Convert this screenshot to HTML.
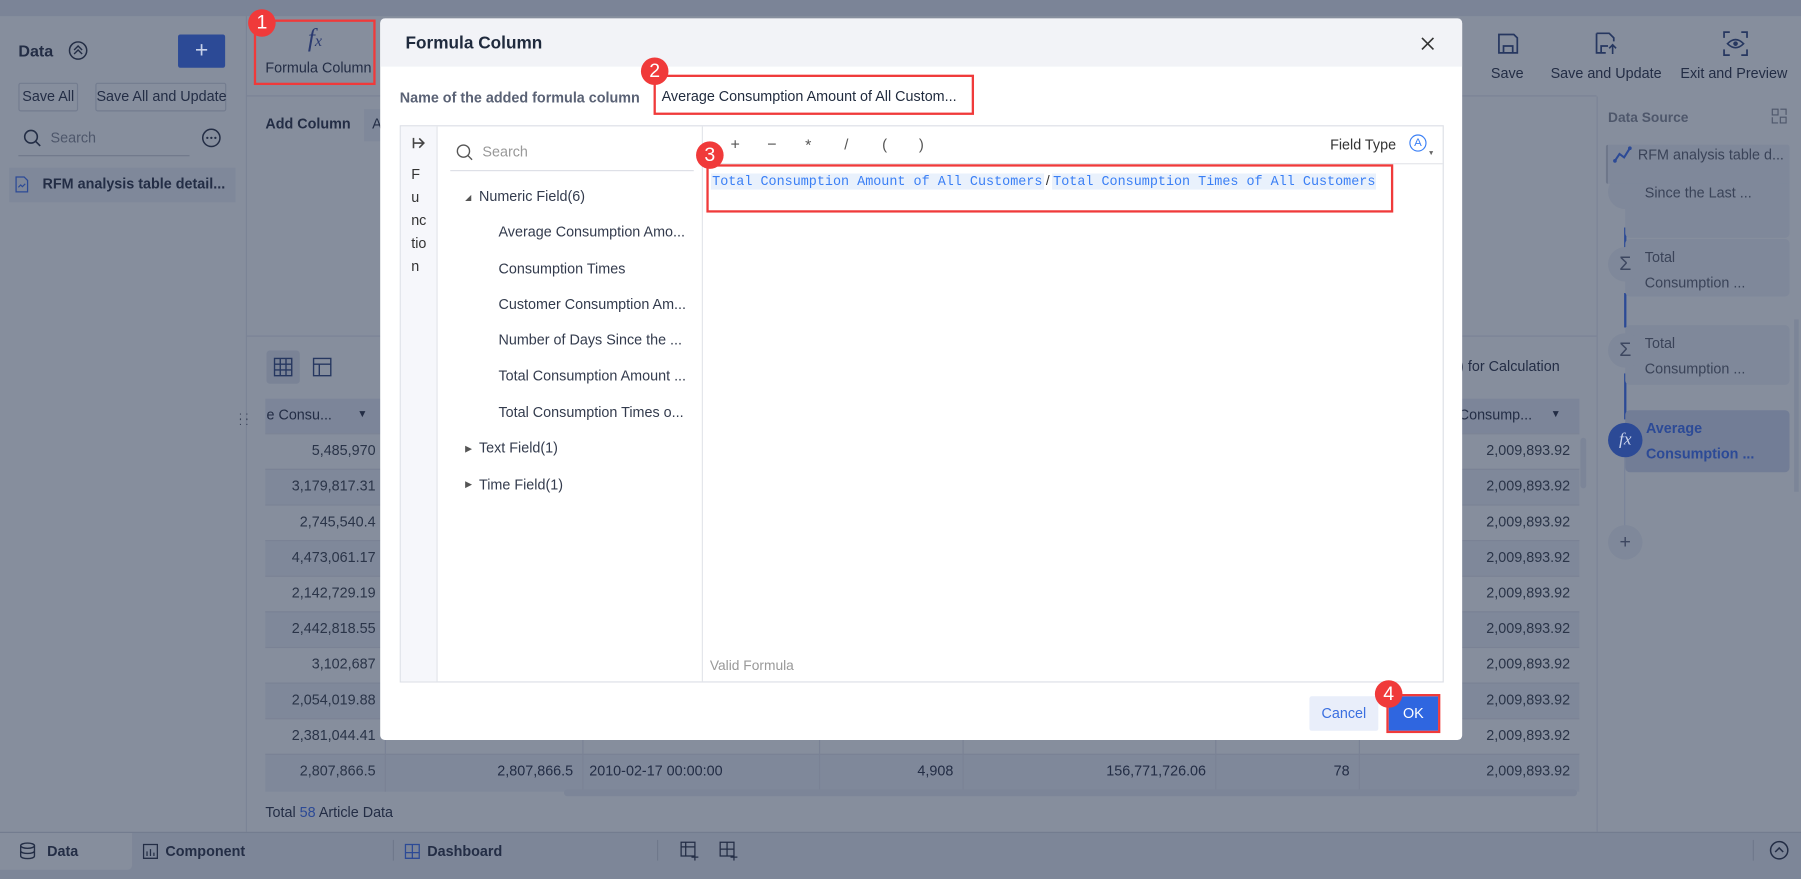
<!DOCTYPE html>
<html><head><meta charset="utf-8"><style>
*{box-sizing:border-box;margin:0;padding:0}
html,body{width:1801px;height:879px;overflow:hidden;background:#868e9d}
#s{position:absolute;left:0;top:0;width:1568px;height:765px;transform:scale(1.14860,1.14902);transform-origin:0 0;font-family:"Liberation Sans",sans-serif;font-size:12.5px;color:#232d45;background:#868e9d}
.a{position:absolute;white-space:nowrap}
.b{font-weight:bold}
.row{position:absolute;left:231px;width:1144px;height:31px;border-top:1px solid #7a8295}
.cell{position:absolute;top:0;height:31px;line-height:31px;text-align:right;padding-right:8px;color:#2a3448;font-size:12.5px}
.badge{position:absolute;width:24px;height:24px;border-radius:12px;background:#f03a3a;color:#fff;font-size:17px;text-align:center;line-height:24px}
.red{position:absolute;border:2px solid #f03a3a}
.fl{position:absolute;left:434px;font-size:12.5px;color:#333b4d}
.card{position:absolute;left:1415px;width:143px;background:#7f889a;border-radius:4px}
.circ{position:absolute;left:1400px;width:30px;height:30px;border-radius:15px;background:#7f889a;color:#3d4760;text-align:center;line-height:30px;font-size:17px}
</style></head><body><div id="s">
<div class="a" style="left:0;top:0;width:1568px;height:14px;background:#7b8497"></div>
<div class="a" style="left:214px;top:14px;width:1px;height:710px;background:#7b8396"></div>
<div class="a b" style="left:16px;top:36px;font-size:14px">Data</div>
<svg class="a" style="left:59px;top:35px" width="18" height="18"><circle cx="9" cy="9" r="7.5" fill="none" stroke="#232d45" stroke-width="1.3"/><path d="M5.5 8.5L9 5l3.5 3.5 M5.5 12L9 8.5l3.5 3.5" fill="none" stroke="#232d45" stroke-width="1.2"/></svg>
<div class="a" style="left:155px;top:30px;width:41px;height:29px;background:#2c4a96;border-radius:2px;color:#c8d2ea;font-size:20px;text-align:center;line-height:28px">+</div>
<div class="a" style="left:16px;top:72px;width:52px;height:25px;border:1px solid #737c8f;border-radius:2px;line-height:23px;text-align:center">Save All</div>
<div class="a" style="left:83px;top:72px;width:114px;height:25px;border:1px solid #737c8f;border-radius:2px;line-height:23px;text-align:center">Save All and Update</div>
<svg class="a" style="left:20px;top:112px" width="16" height="16"><circle cx="7" cy="7" r="5.5" fill="none" stroke="#232d45" stroke-width="1.4"/><line x1="11" y1="11" x2="15" y2="15" stroke="#232d45" stroke-width="1.4"/></svg>
<div class="a" style="left:44px;top:113px;color:#4e576b">Search</div>
<div class="a" style="left:16px;top:135px;width:149px;height:1px;background:#6f788b"></div>
<svg class="a" style="left:175px;top:111px" width="18" height="18"><circle cx="9" cy="9" r="7.5" fill="none" stroke="#232d45" stroke-width="1.3"/><circle cx="5.5" cy="9" r="1" fill="#232d45"/><circle cx="9" cy="9" r="1" fill="#232d45"/><circle cx="12.5" cy="9" r="1" fill="#232d45"/></svg>
<div class="a" style="left:8px;top:146px;width:197px;height:30px;background:#7f889a"></div>
<svg class="a" style="left:13px;top:153px" width="12" height="15"><path d="M1 1h7l3 3v10H1z" fill="none" stroke="#2c4a96" stroke-width="1.1"/><path d="M3 10l2-2 1.5 1.5L9 7" fill="none" stroke="#2c4a96" stroke-width="1"/></svg>
<div class="a b" style="left:37px;top:153px">RFM analysis table detail...</div>
<div class="a" style="left:215px;top:83px;width:1175px;height:1px;background:#7b8396"></div>
<div class="a" style="left:268px;top:20px;font-family:'Liberation Serif',serif;font-style:italic;font-size:22px;color:#2a3a70">f<span style="font-size:14px">x</span></div>
<div class="a" style="left:231px;top:52px;font-size:12.5px">Formula Column</div>
<div class="red" style="left:221px;top:17px;width:106px;height:57px"></div>
<div class="badge" style="left:216px;top:8px">1</div>
<div class="a" style="left:1264px;top:57px">n</div>
<svg class="a" style="left:1303px;top:28px" width="20" height="20"><path d="M2 2h13l3 3v13H2z M6 18v-6h8v6" fill="none" stroke="#263760" stroke-width="1.5"/></svg>
<div class="a" style="left:1298px;top:57px">Save</div>
<svg class="a" style="left:1388px;top:27px" width="22" height="22"><path d="M2 2h11l4 4v3 M2 2v17h8 M6 19v-6h6" fill="none" stroke="#263760" stroke-width="1.5"/><path d="M16 20v-8 M13 15l3-3 3 3" fill="none" stroke="#263760" stroke-width="1.4"/></svg>
<div class="a" style="left:1350px;top:57px">Save and Update</div>
<svg class="a" style="left:1500px;top:27px" width="22" height="22"><path d="M1 6V1h5 M16 1h5v5 M21 16v5h-5 M6 21H1v-5" fill="none" stroke="#263760" stroke-width="1.5"/><path d="M4 11q7-7 14 0q-7 7-14 0z" fill="none" stroke="#263760" stroke-width="1.4"/><circle cx="11" cy="11" r="2" fill="#263760"/></svg>
<div class="a" style="left:1463px;top:57px">Exit and Preview</div>
<div class="a b" style="left:231px;top:101px">Add Column</div>
<div class="a" style="left:317px;top:95px;width:20px;height:28px;background:#7f889a;padding:6px 0 0 7px">A</div>
<div class="a" style="left:215px;top:292px;width:1175px;height:1px;background:#7b8396"></div>
<div class="a" style="left:232px;top:305px;width:29px;height:29px;background:#7a8396;border-radius:3px"></div>
<svg class="a" style="left:238px;top:311px" width="17" height="17"><path d="M1 1h15v15H1z M1 6h15 M1 11h15 M6 1v15 M11 1v15" fill="none" stroke="#263760" stroke-width="1.2"/></svg>
<svg class="a" style="left:272px;top:311px" width="17" height="17"><path d="M1 1h15v15H1z M1 6h15 M6 6v10" fill="none" stroke="#263760" stroke-width="1.2"/></svg>
<div class="a" style="left:1253px;top:312px">d(s) for Calculation</div>
<div class="a" style="left:208px;top:360px;font-size:10px;line-height:5px;color:#3a4358">: :<br>: :</div>
<div class="a" style="left:231px;top:347px;width:1144px;height:30px;background:#7c8599"></div>
<div class="a" style="left:232px;top:354px">e Consu...</div><div class="a" style="left:311px;top:355px;font-size:9px">▼</div>
<div class="a" style="left:1270px;top:354px">Consump...</div><div class="a" style="left:1350px;top:355px;font-size:9px">▼</div>
<div class="row" style="top:377px;background:#868e9d"></div>
<div class="row" style="top:408px;background:#7f889a"></div>
<div class="row" style="top:439px;background:#868e9d"></div>
<div class="row" style="top:470px;background:#7f889a"></div>
<div class="row" style="top:501px;background:#868e9d"></div>
<div class="row" style="top:532px;background:#7f889a"></div>
<div class="row" style="top:563px;background:#868e9d"></div>
<div class="row" style="top:594px;background:#7f889a"></div>
<div class="row" style="top:625px;background:#868e9d"></div>
<div class="row" style="top:656px;background:#7f889a;height:33px"></div>
<div class="a" style="left:231px;top:377px;width:104px">
<div class="cell" style="top:0;width:104px">5,485,970</div>
<div class="cell" style="top:31px;width:104px">3,179,817.31</div>
<div class="cell" style="top:62px;width:104px">2,745,540.4</div>
<div class="cell" style="top:93px;width:104px">4,473,061.17</div>
<div class="cell" style="top:124px;width:104px">2,142,729.19</div>
<div class="cell" style="top:155px;width:104px">2,442,818.55</div>
<div class="cell" style="top:186px;width:104px">3,102,687</div>
<div class="cell" style="top:217px;width:104px">2,054,019.88</div>
<div class="cell" style="top:248px;width:104px">2,381,044.41</div>
<div class="cell" style="top:279px;width:104px">2,807,866.5</div>
</div>
<div class="a" style="left:1183px;top:377px;width:192px">
<div class="cell" style="top:0;width:192px">2,009,893.92</div><div class="cell" style="top:31px;width:192px">2,009,893.92</div><div class="cell" style="top:62px;width:192px">2,009,893.92</div><div class="cell" style="top:93px;width:192px">2,009,893.92</div><div class="cell" style="top:124px;width:192px">2,009,893.92</div><div class="cell" style="top:155px;width:192px">2,009,893.92</div><div class="cell" style="top:186px;width:192px">2,009,893.92</div><div class="cell" style="top:217px;width:192px">2,009,893.92</div><div class="cell" style="top:248px;width:192px">2,009,893.92</div><div class="cell" style="top:279px;width:192px">2,009,893.92</div>
</div>
<div class="a" style="left:335px;top:625px;width:1px;height:64px;background:#7a8295"></div>
<div class="a" style="left:507px;top:625px;width:1px;height:64px;background:#7a8295"></div>
<div class="a" style="left:713px;top:625px;width:1px;height:64px;background:#7a8295"></div>
<div class="a" style="left:838px;top:625px;width:1px;height:64px;background:#7a8295"></div>
<div class="a" style="left:1058px;top:625px;width:1px;height:64px;background:#7a8295"></div>
<div class="a" style="left:1183px;top:625px;width:1px;height:64px;background:#7a8295"></div>
<div class="a" style="left:335px;top:656px;width:172px;height:31px;line-height:31px;text-align:right;padding-right:8px">2,807,866.5</div>
<div class="a" style="left:513px;top:656px;line-height:31px">2010-02-17 00:00:00</div>
<div class="a" style="left:713px;top:656px;width:125px;line-height:31px;text-align:right;padding-right:8px">4,908</div>
<div class="a" style="left:838px;top:656px;width:220px;line-height:31px;text-align:right;padding-right:8px">156,771,726.06</div>
<div class="a" style="left:1058px;top:656px;width:125px;line-height:31px;text-align:right;padding-right:8px">78</div>
<div class="a" style="left:491px;top:687px;width:882px;height:6px;background:#7c8598;border-radius:3px"></div>
<div class="a" style="left:1376px;top:381px;width:5px;height:44px;background:#7c8598;border-radius:3px"></div>
<div class="a" style="left:231px;top:700px">Total <span style="color:#2c4a96">58</span> Article Data</div>
<div class="a" style="left:1390px;top:84px;width:1px;height:640px;background:#7b8396"></div>
<div class="a b" style="left:1400px;top:95px;color:#4e576b;font-size:12px">Data Source</div>
<svg class="a" style="left:1542px;top:94px" width="14" height="14"><path d="M1 1h5v5H1z M8 8h5v5H8z M1 8v5h5 M8 1h5v5" fill="none" stroke="#4e576b" stroke-width="1"/></svg>
<div class="a" style="left:1414px;top:198px;width:2px;height:30px;background:#2c4a96"></div>
<div class="a" style="left:1414px;top:255px;width:2px;height:30px;background:#2c4a96"></div>
<div class="a" style="left:1414px;top:325px;width:2px;height:40px;background:#2c4a96"></div>
<div class="a" style="left:1414px;top:398px;width:1px;height:60px;background:#79839a"></div>
<div class="card" style="top:150px;height:57px"></div>
<div class="circ" style="top:152px"></div>
<div class="a" style="left:1398px;top:126px;width:160px;height:34px;background:#7f889a;border-left:2px solid #6e778a;border-radius:2px"></div>
<svg class="a" style="left:1404px;top:127px" width="18" height="16"><path d="M2 13l4-6 4 3 5-8" fill="none" stroke="#2c4a96" stroke-width="1.8"/><circle cx="2" cy="13" r="1.6" fill="#2c4a96"/><circle cx="15" cy="2" r="1.6" fill="#2c4a96"/></svg>
<div class="a" style="left:1426px;top:128px;color:#3a4358">RFM analysis table d...</div>
<div class="a" style="left:1432px;top:161px;color:#3a4358">Since the Last ...</div>
<div class="card" style="top:208px;height:50px"></div>
<div class="circ" style="top:215px">Σ</div>
<div class="a" style="left:1432px;top:213px;color:#3a4358;line-height:22px">Total<br>Consumption ...</div>
<div class="card" style="top:283px;height:52px"></div>
<div class="circ" style="top:290px">Σ</div>
<div class="a" style="left:1432px;top:288px;color:#3a4358;line-height:22px">Total<br>Consumption ...</div>
<div class="card" style="top:357px;height:54px;background:#727d96"></div>
<div class="circ" style="top:368px;background:#2c4a96;color:#c9d2ea;font-family:'Liberation Serif',serif;font-style:italic;font-size:15px">fx</div>
<div class="a b" style="left:1433px;top:362px;color:#2c4a96;line-height:22px">Average<br>Consumption ...</div>
<div class="circ" style="top:457px">+</div>
<div class="a" style="left:1562px;top:278px;width:4px;height:150px;background:#7c8598"></div>
<div class="a" style="left:0;top:724px;width:1568px;height:41px;background:#7d8698;border-top:1px solid #737c8f"></div>
<div class="a" style="left:0;top:725px;width:115px;height:32px;background:#868e9d;border-radius:0 0 4px 0"></div>
<svg class="a" style="left:17px;top:733px" width="14" height="15"><ellipse cx="7" cy="3" rx="6" ry="2.3" fill="none" stroke="#232d45" stroke-width="1.2"/><path d="M1 3v9c0 3 12 3 12 0V3 M1 7.5c0 3 12 3 12 0" fill="none" stroke="#232d45" stroke-width="1.2"/></svg>
<div class="a b" style="left:41px;top:734px">Data</div>
<svg class="a" style="left:124px;top:734px" width="14" height="14"><path d="M1 1h12v12H1z M4 11V7 M7 11V5 M10 11V8" fill="none" stroke="#232d45" stroke-width="1.1"/></svg>
<div class="a b" style="left:144px;top:734px">Component</div>
<div class="a" style="left:342px;top:731px;width:1px;height:18px;background:#6f788b"></div>
<svg class="a" style="left:352px;top:734px" width="14" height="14"><path d="M1 1h12v12H1z M7 1v12 M1 8h12" fill="none" stroke="#2c4a96" stroke-width="1.1"/></svg>
<div class="a b" style="left:372px;top:734px">Dashboard</div>
<div class="a" style="left:572px;top:731px;width:1px;height:18px;background:#6f788b"></div>
<svg class="a" style="left:592px;top:732px" width="17" height="17"><path d="M1 1h12v12H1z M5 1v12 M1 5h12 M13 11v6 M10 14h6" fill="none" stroke="#232d45" stroke-width="1.1"/></svg>
<svg class="a" style="left:626px;top:732px" width="17" height="17"><path d="M1 1h12v12H1z M7 1v12 M1 7h12 M13 11v6 M10 14h6" fill="none" stroke="#232d45" stroke-width="1.1"/></svg>
<div class="a" style="left:1526px;top:731px;width:1px;height:18px;background:#6f788b"></div>
<svg class="a" style="left:1540px;top:731px" width="18" height="18"><circle cx="9" cy="9" r="7.5" fill="none" stroke="#232d45" stroke-width="1.3"/><path d="M5.5 10.5L9 7l3.5 3.5" fill="none" stroke="#232d45" stroke-width="1.3"/></svg>
<div class="a" style="left:331px;top:16px;width:942px;height:628px;background:#fff;border-radius:4px;overflow:hidden">
 <div class="a" style="left:0;top:0;width:942px;height:42px;background:#f2f3f7"></div>
</div>
<div class="a b" style="left:353px;top:29px;font-size:15px;color:#1f2a3d">Formula Column</div>
<svg class="a" style="left:1237px;top:32px" width="12" height="12"><path d="M1 1l10 10M11 1L1 11" stroke="#333" stroke-width="1.4"/></svg>
<div class="a b" style="left:348px;top:78px;color:#5a6275;font-size:12.5px">Name of the added formula column</div>
<div class="a" style="left:576px;top:77px;color:#1f2a3d">Average Consumption Amount of All Custom...</div>
<div class="red" style="left:569px;top:65px;width:279px;height:35px"></div>
<div class="badge" style="left:558px;top:50px">2</div>
<div class="a" style="left:348px;top:109px;width:909px;height:485px;border:1px solid #dcdfe6"></div>
<div class="a" style="left:349px;top:110px;width:32px;height:483px;background:#f6f7fb;border-right:1px solid #e3e5ea"></div>
<svg class="a" style="left:359px;top:119px" width="12" height="11"><path d="M1 1v9 M1 5.5h9 M6 1.5l4 4-4 4" fill="none" stroke="#444" stroke-width="1.4"/></svg>
<div class="a" style="left:358px;top:142px;line-height:20px;color:#333;font-size:12.5px">F<br>u<br>nc<br>tio<br>n</div>
<div class="a" style="left:611px;top:110px;width:1px;height:483px;background:#e3e5ea"></div>
<svg class="a" style="left:397px;top:125px" width="15" height="15"><circle cx="6.5" cy="6.5" r="5.3" fill="none" stroke="#555" stroke-width="1.2"/><line x1="10.5" y1="10.5" x2="14" y2="14" stroke="#555" stroke-width="1.2"/></svg>
<div class="a" style="left:420px;top:125px;color:#999">Search</div>
<div class="a" style="left:392px;top:148px;width:212px;height:1px;background:#dcdfe6"></div>
<div class="a" style="left:405px;top:168px;font-size:7px;color:#555">◢</div>
<div class="a" style="left:417px;top:164px;color:#333b4d">Numeric Field(6)</div>
<div class="fl" style="top:195px">Average Consumption Amo...</div>
<div class="fl" style="top:227px">Consumption Times</div>
<div class="fl" style="top:258px">Customer Consumption Am...</div>
<div class="fl" style="top:289px">Number of Days Since the ...</div>
<div class="fl" style="top:320px">Total Consumption Amount ...</div>
<div class="fl" style="top:352px">Total Consumption Times o...</div>
<div class="a" style="left:405px;top:386px;font-size:8px;color:#555">▶</div>
<div class="a" style="left:417px;top:383px;color:#333b4d">Text Field(1)</div>
<div class="a" style="left:405px;top:417px;font-size:8px;color:#555">▶</div>
<div class="a" style="left:417px;top:415px;color:#333b4d">Time Field(1)</div>
<div class="a" style="left:612px;top:142px;width:644px;height:1px;background:#e3e5ea"></div>
<div class="a" style="left:636px;top:117px;color:#555;font-size:14px">+</div>
<div class="a" style="left:668px;top:117px;color:#555;font-size:14px">−</div>
<div class="a" style="left:701px;top:118px;color:#555;font-size:14px">*</div>
<div class="a" style="left:735px;top:118px;color:#555;font-size:13px">/</div>
<div class="a" style="left:768px;top:118px;color:#555;font-size:13px">(</div>
<div class="a" style="left:800px;top:118px;color:#555;font-size:13px">)</div>
<div class="a" style="left:1158px;top:119px;color:#333">Field Type</div>
<div class="a" style="left:1227px;top:117px;width:15px;height:15px;border:1.3px solid #3a7ff5;border-radius:8px;color:#3a7ff5;font-size:10px;text-align:center;line-height:13px">A</div>
<div class="a" style="left:1243px;top:131px;font-size:6px;color:#666">▼</div>
<div class="a" style="left:619px;top:149px;font-family:'Liberation Mono',monospace;font-size:11.7px;color:#3a7ff5;line-height:17px"><span style="background:#e9f1fc;padding:0 1px">Total Consumption Amount of All Customers</span><span style="color:#333;font-family:'Liberation Sans',sans-serif;font-size:12px;padding:0 2px">/</span><span style="background:#e9f1fc;padding:0 1px">Total Consumption Times of All Customers</span></div>
<div class="red" style="left:615px;top:143px;width:598px;height:42px"></div>
<div class="badge" style="left:606px;top:123px">3</div>
<div class="a" style="left:618px;top:572px;color:#999;font-size:12px">Valid Formula</div>
<div class="a" style="left:1140px;top:606px;width:60px;height:30px;background:#e9eefa;color:#3a6fe0;text-align:center;line-height:30px;border-radius:2px">Cancel</div>
<div class="a" style="left:1209px;top:606px;width:43px;height:30px;background:#2f66e0;color:#fff;text-align:center;line-height:30px">OK</div>
<div class="red" style="left:1207px;top:604px;width:47px;height:34px"></div>
<div class="badge" style="left:1197px;top:592px">4</div>
</div></body></html>
